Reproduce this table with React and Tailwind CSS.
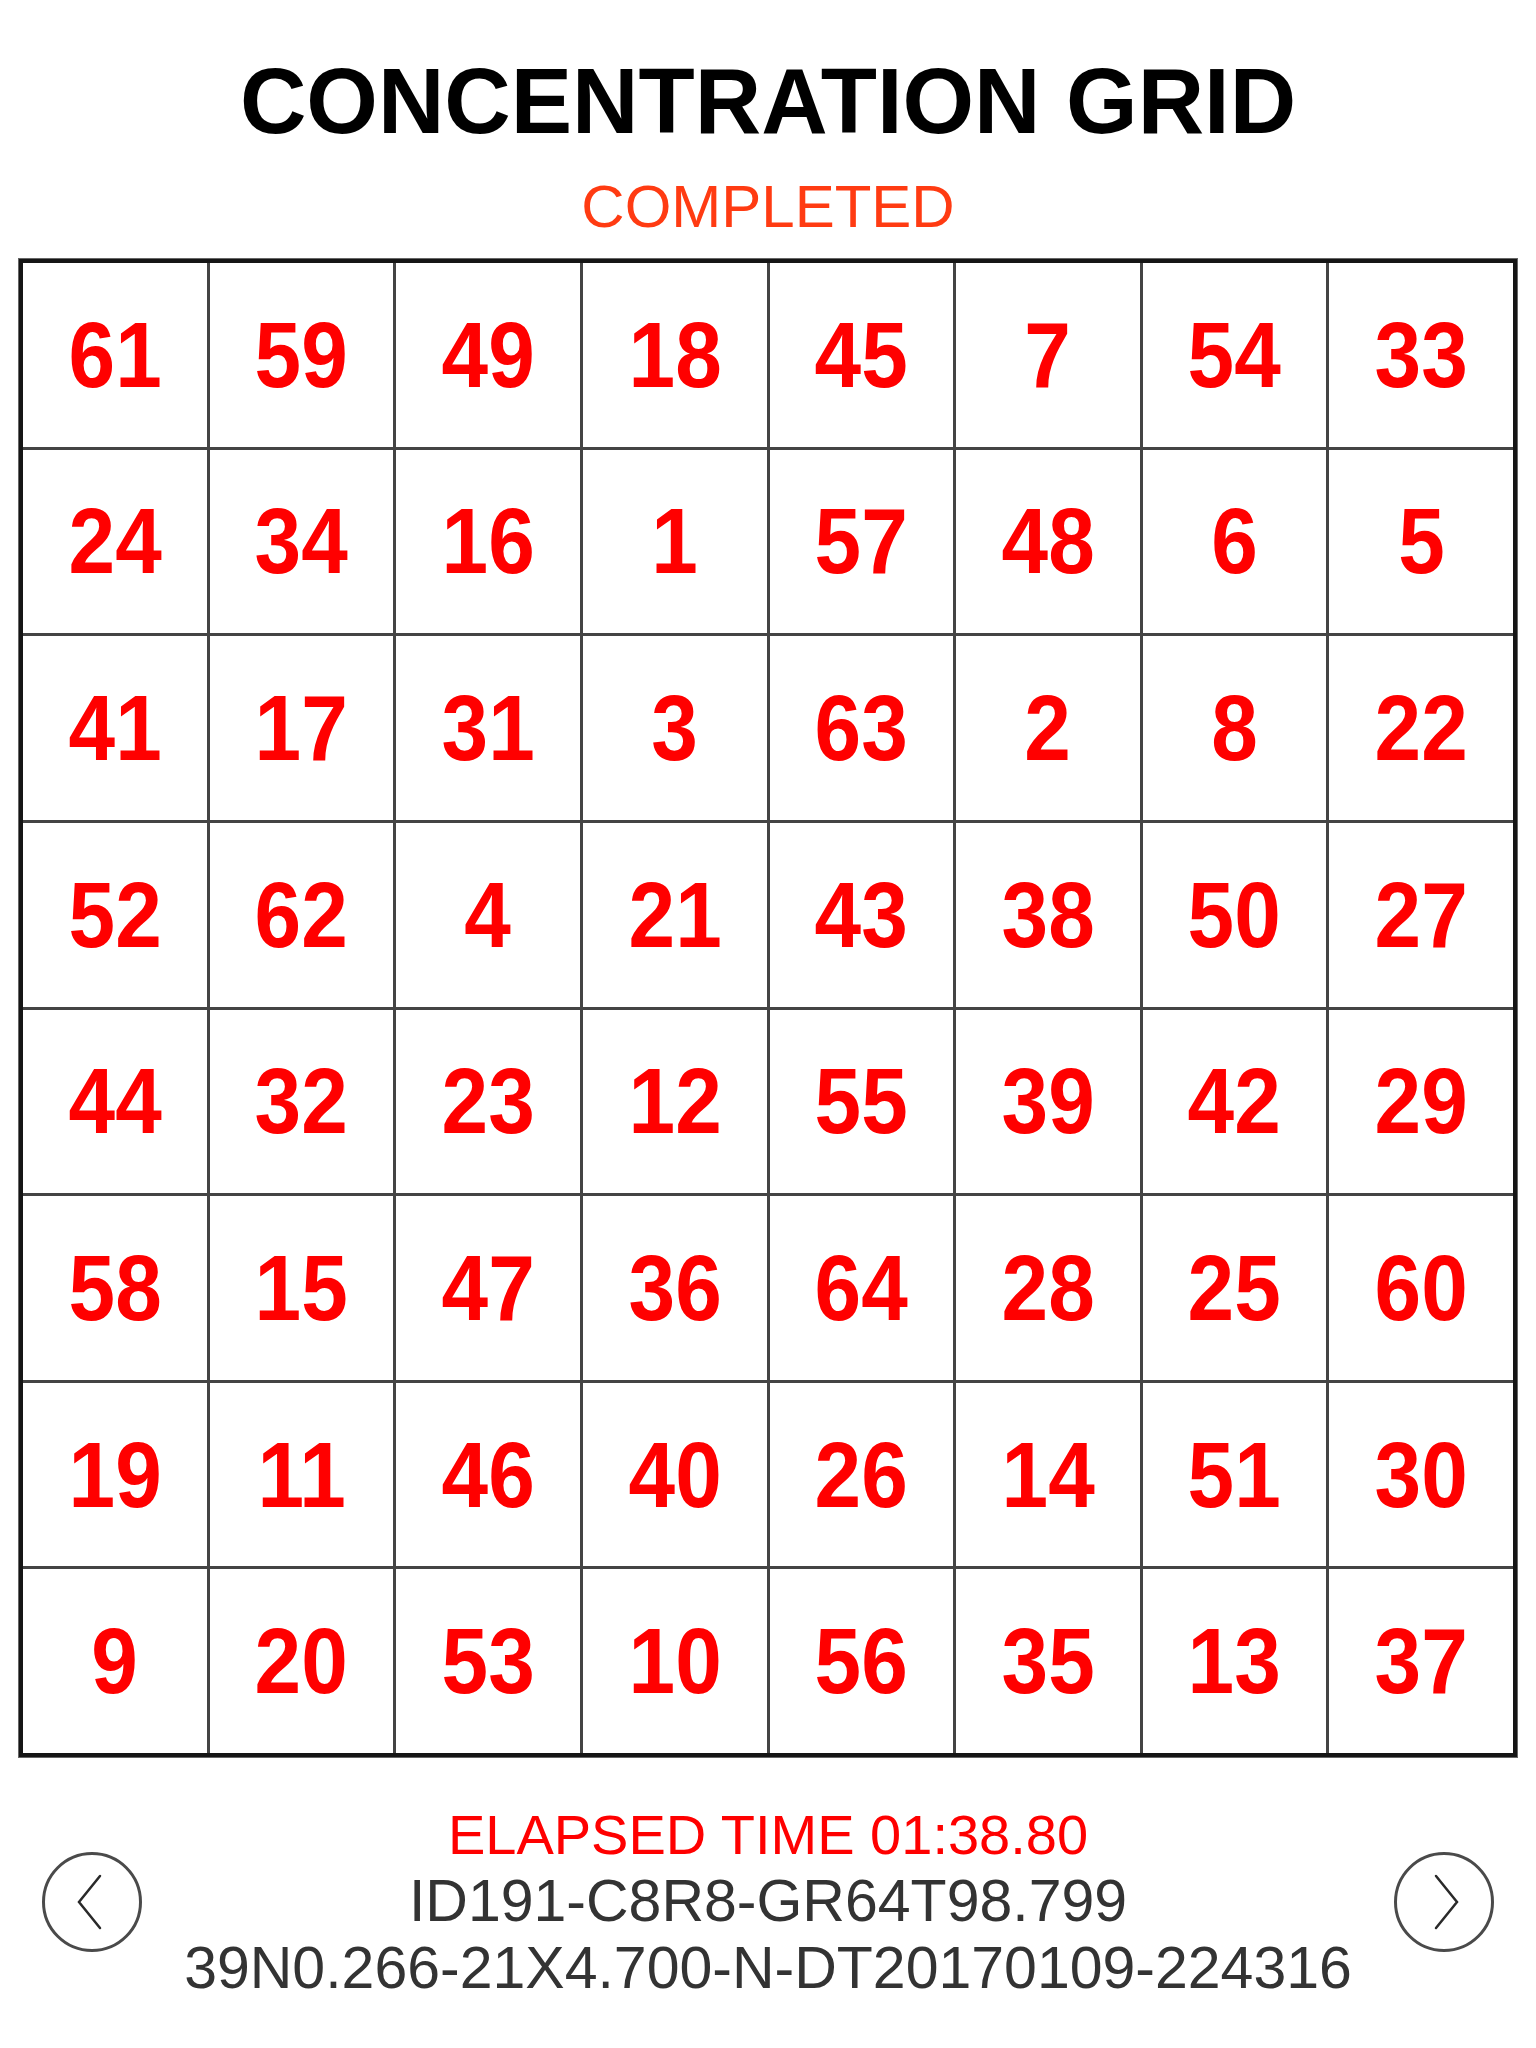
import React from 'react';

// 8x8 grid, row by row
const NUMBERS = [
  [61, 59, 49, 18, 45, 7, 54, 33],
  [24, 34, 16, 1, 57, 48, 6, 5],
  [41, 17, 31, 3, 63, 2, 8, 22],
  [52, 62, 4, 21, 43, 38, 50, 27],
  [44, 32, 23, 12, 55, 39, 42, 29],
  [58, 15, 47, 36, 64, 28, 25, 60],
  [19, 11, 46, 40, 26, 14, 51, 30],
  [9, 20, 53, 10, 56, 35, 13, 37],
];

const NavCircle = ({ dir }) => (
  <button className="w-[100px] h-[100px] shrink-0 rounded-full border-[3px] border-[#4a4a4a] flex items-center justify-center bg-white">
    <svg width="40" height="60" viewBox="0 0 40 60" fill="none" stroke="#2a2a2a" strokeWidth="2.5" strokeLinecap="round" strokeLinejoin="miter">
      {dir === 'left' ? <path d="M28 4 L7 30 L28 56" /> : <path d="M12 4 L33 30 L12 56" />}
    </svg>
  </button>
);

export default function App() {
  return (
    <div className="w-[1536px] min-h-[2048px] bg-white font-['Liberation_Sans',Arial,sans-serif]">
      <h1 className="pt-[55px] text-center text-[92px] leading-none font-bold text-black">
        CONCENTRATION GRID
      </h1>
      <p className="mt-[30px] text-center text-[60px] leading-none text-[#ff3b12]">COMPLETED</p>

      {/* ── grid ── */}
      <div className="mt-[22px] mx-auto w-[1498px] border-4 border-[#151515] shadow-[0_0_0_1px_#666]">
        <div className="grid grid-cols-8 gap-[3px] bg-[#444]">
          {NUMBERS.flat().map((n, i) => (
            <div key={i} className="aspect-square bg-white flex items-center justify-center">
              <span className="inline-block scale-x-[0.91] text-[92px] leading-none font-bold text-[#ff0000]">{n}</span>
            </div>
          ))}
        </div>
      </div>

      {/* ── footer ── */}
      <div className="mt-[44px] flex items-center justify-between px-[42px]">
        <NavCircle dir="left" />
        <div className="flex-1 text-center leading-[67px]">
          <div className="text-[56px] text-[#ff0000]">ELAPSED TIME 01:38.80</div>
          <div className="text-[59px] text-[#333]">ID191-C8R8-GR64T98.799</div>
          <div className="text-[59px] text-[#333]">39N0.266-21X4.700-N-DT20170109-224316</div>
        </div>
        <NavCircle dir="right" />
      </div>
    </div>
  );
}
